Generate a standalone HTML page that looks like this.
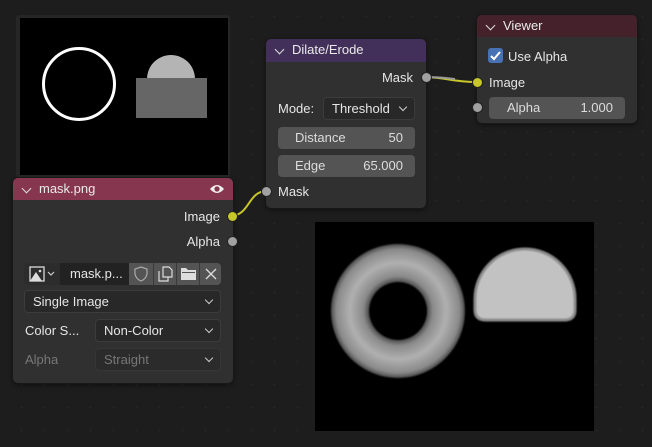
<!DOCTYPE html>
<html><head><style>
*{box-sizing:border-box;margin:0;padding:0}
body{width:652px;height:447px;overflow:hidden;background:#1d1d1d;font-family:"Liberation Sans","DejaVu Sans",sans-serif;font-size:13px;color:#e6e6e6;position:relative;
background-image:radial-gradient(circle,#262626 1px,transparent 1.2px);background-size:23px 23px;background-position:10px 5px}
.a{position:absolute}
.node{position:absolute;background:#303030;border-radius:5px;box-shadow:0 0 0 1px #181818,0 2px 5px rgba(0,0,0,.5)}
.hd{position:absolute;left:0;right:0;top:0;border-radius:5px 5px 0 0;padding-left:26px;line-height:22px;font-size:13px;color:#eaeaea}
.chev{position:absolute;left:10px;top:7px;width:7px;height:7px;border-right:1.3px solid #ddd;border-bottom:1.3px solid #ddd;transform:rotate(45deg)}
.sock{position:absolute;width:9px;height:9px;border-radius:50%;background:#a1a1a1;box-shadow:0 0 0 1px #222}
.y{background:#c7c729}
.fld{position:absolute;background:#545454;border-radius:4px;height:22px;line-height:22px;font-size:13px;color:#ddd}
.dd{position:absolute;background:#282828;border:1px solid #3c3c3c;border-radius:4px;height:23px;line-height:21px;padding-left:8px;font-size:13px}
.dd:after{content:"";position:absolute;right:8px;top:6px;width:5px;height:5px;border-right:1.3px solid #ccc;border-bottom:1.3px solid #ccc;transform:rotate(45deg)}
.r{text-align:right}
</style></head><body>
<svg class="a" style="left:0;top:0" width="652" height="447">
<path d="M232 216 C250 214,248 192,266 191" stroke="#c7c729" stroke-width="2" fill="none"/>
<path d="M426 77 C450 78,452 82,477 82" stroke="#c7c729" stroke-width="2" fill="none"/>
<path d="M426 77 C440 77,445 78,455 79" stroke="#9a9a9a" stroke-width="2" fill="none"/>
</svg>
<div class="a" style="left:16px;top:15px;width:214px;height:162px;background:#262626;border-radius:3px"></div>
<svg class="a" style="left:20px;top:18px" width="208" height="157">
<rect width="208" height="157" fill="#000"/>
<circle cx="59" cy="66" r="35.5" fill="none" stroke="#fff" stroke-width="3"/>
<path d="M127 61 A24 24 0 0 1 175 61 Z" fill="#b4b4b4"/>
<rect x="116" y="60" width="71" height="40" fill="#666"/>
</svg>
<div class="node" style="left:13px;top:178px;width:220px;height:205px">
<div class="hd" style="background:#873650;height:22px"><span class="chev"></span>mask.png
<svg class="a" style="right:8px;top:5px" width="16" height="12"><path d="M1 6 Q8 -2 15 6 Q8 14 1 6Z" fill="#eee"/><circle cx="8" cy="6" r="2.6" fill="#873650"/></svg></div>
<div class="a r" style="right:13px;top:31px">Image</div>
<div class="a r" style="right:13px;top:56px">Alpha</div>
<div class="a" style="left:11px;top:85px;width:197px;height:22px;border-radius:4px;background:#3a3a3a;overflow:hidden">
 <div class="a" style="left:0;top:0;width:37px;height:22px;background:#2c2c2c;border-right:1px solid #222">
  <svg class="a" style="left:5px;top:3px" width="30" height="16"><rect x="1" y="1" width="14" height="14" fill="none" stroke="#ddd" stroke-width="1.3"/><path d="M1 15 L7 6 L13 15Z" fill="#ddd"/><circle cx="11" cy="5" r="1.3" fill="#ddd"/><path d="M19 6 L22 9 L25 6" stroke="#ccc" fill="none" stroke-width="1.2"/></svg></div>
 <div class="a" style="left:37px;top:0;width:68px;height:22px;background:#222;line-height:22px;padding-left:9px">mask.p...</div>
 <div class="a" style="left:105px;top:0;width:24px;height:22px;background:#545454"><svg class="a" style="left:5px;top:3px" width="14" height="16"><path d="M7 1 L13 3 L13 8 Q12 13 7 15 Q2 13 1 8 L1 3Z" fill="none" stroke="#aaa" stroke-width="1.2"/></svg></div>
 <div class="a" style="left:130px;top:0;width:22px;height:22px;background:#545454"><svg class="a" style="left:4px;top:3px" width="15" height="16"><path d="M5 1 H11 L14 4 V11 H5Z M1 5 V15 H10 V11" fill="none" stroke="#ddd" stroke-width="1.2"/></svg></div>
 <div class="a" style="left:153px;top:0;width:22px;height:22px;background:#545454"><svg class="a" style="left:3px;top:4px" width="17" height="14"><path d="M1 1 H6 L8 3 H16 V13 H1Z" fill="#ddd"/><rect x="2" y="5" width="13" height="1" fill="#545454"/></svg></div>
 <div class="a" style="left:176px;top:0;width:21px;height:22px;background:#545454"><svg class="a" style="left:5px;top:5px" width="12" height="12"><path d="M1 1 L11 11 M11 1 L1 11" stroke="#ddd" stroke-width="1.3"/></svg></div>
</div>
<div class="dd" style="left:11px;top:112px;width:197px">Single Image</div>
<div class="a" style="left:12px;top:145px">Color S...</div>
<div class="dd" style="left:82px;top:141px;width:126px">Non-Color</div>
<div class="a" style="left:12px;top:174px;color:#777">Alpha</div>
<div class="dd" style="left:82px;top:170px;width:126px;color:#777;background:#2b2b2b;border-color:#363636">Straight</div>
</div>
<div class="sock y" style="left:228px;top:212px"></div>
<div class="sock" style="left:228px;top:237px"></div>
<div class="node" style="left:266px;top:39px;width:160px;height:169px">
<div class="hd" style="background:#43305a;height:23px"><span class="chev"></span>Dilate/Erode</div>
<div class="a r" style="right:13px;top:31px">Mask</div>
<div class="a" style="left:12px;top:62px">Mode:</div>
<div class="dd" style="left:57px;top:58px;width:92px">Threshold</div>
<div class="fld" style="left:12px;top:88px;width:137px;padding:0 12px 0 17px">Distance<span style="float:right">50</span></div>
<div class="fld" style="left:12px;top:116px;width:137px;padding:0 12px 0 17px">Edge<span style="float:right">65.000</span></div>
<div class="a" style="left:12px;top:145px">Mask</div>
</div>
<div class="sock" style="left:422px;top:73px"></div>
<div class="sock" style="left:262px;top:187px"></div>
<div class="node" style="left:477px;top:15px;width:160px;height:108px">
<div class="hd" style="background:#45222b;height:22px"><span class="chev"></span>Viewer</div>
<div class="a" style="left:11px;top:33px;width:15px;height:15px;background:#4772b3;border-radius:3px"><svg class="a" style="left:2px;top:2px" width="11" height="11"><path d="M1 6 L4 9 L10 2" stroke="#fff" stroke-width="2" fill="none"/></svg></div>
<div class="a" style="left:31px;top:34px">Use Alpha</div>
<div class="a" style="left:12px;top:60px">Image</div>
<div class="fld" style="left:12px;top:82px;width:136px;padding:0 12px 0 18px">Alpha<span style="float:right">1.000</span></div>
</div>
<div class="sock y" style="left:473px;top:78px"></div>
<div class="sock" style="left:473px;top:103px"></div>
<svg class="a" style="left:315px;top:222px" width="279" height="209">
<defs>
<radialGradient id="t" cx="83" cy="89" r="67" gradientUnits="userSpaceOnUse">
<stop offset="0.43" stop-color="#4a4a4a"/><stop offset="0.52" stop-color="#8a8a8a"/><stop offset="0.72" stop-color="#b0b0b0"/><stop offset="0.92" stop-color="#8a8a8a"/><stop offset="1" stop-color="#4a4a4a"/></radialGradient>
<filter id="b"><feGaussianBlur stdDeviation="0.8"/></filter>
</defs>
<rect width="279" height="209" fill="#000"/>
<path d="M83 22 A67 67 0 1 1 82.9 22 Z M83 60 A29 29 0 1 0 83.1 60 Z" fill="url(#t)" fill-rule="evenodd" filter="url(#b)"/>
<path d="M160 77 A50 50 0 0 1 260 77 L260 88 Q260 98 249 98 L171 98 Q160 98 160 88Z" fill="#c2c2c2" stroke="#8c8c8c" stroke-width="3" filter="url(#b)"/>
</svg>
</body></html>
